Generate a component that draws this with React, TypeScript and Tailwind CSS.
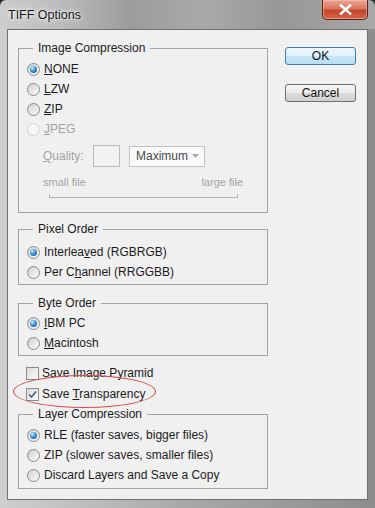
import type { ReactNode } from 'react';

const ui = "font-['Liberation_Sans',Arial,sans-serif]";

function Radio({ on = false, disabled = false }: { on?: boolean; disabled?: boolean }) {
  if (disabled) {
    return <span className="h-[13px] w-[13px] shrink-0 rounded-full border border-[#d2d2d2] bg-[#f5f5f5]" />;
  }
  return (
    <span className="flex h-[13px] w-[13px] shrink-0 items-center justify-center rounded-full border border-[#8b8b8b] bg-[linear-gradient(135deg,#cfcfcf,#fdfdfd)]">
      {on ? (
        <span className="h-[7px] w-[7px] rounded-full bg-[radial-gradient(circle_at_35%_30%,#c4ecff,#3d93d4_45%,#0e4c84)]" />
      ) : (
        <span className="h-[9px] w-[9px] rounded-full bg-[linear-gradient(135deg,#d4d4d4,#f7f7f7)]" />
      )}
    </span>
  );
}

function Check({ on = false }: { on?: boolean }) {
  return (
    <span className="flex h-[13px] w-[13px] shrink-0 items-center justify-center border border-[#8b8b8b] bg-[linear-gradient(135deg,#dadada,#fdfdfd)]">
      {on && (
        <svg width="9" height="9" viewBox="0 0 9 9">
          <path d="M1 4.5 L3.5 7 L8 1.5" fill="none" stroke="#4a5a8e" strokeWidth="1.7" />
        </svg>
      )}
    </span>
  );
}

function Option({ children, on, disabled }: { children: ReactNode; on?: boolean; disabled?: boolean }) {
  return (
    <div className={`flex h-5 items-center gap-[4px] ${disabled ? 'text-[#a3a3a3]' : 'text-[#1b1b1b]'}`}>
      <Radio on={on} disabled={disabled} />
      <span>{children}</span>
    </div>
  );
}

function Group({ title, children, pad, className = '' }: { title: string; children: ReactNode; pad: string; className?: string }) {
  return (
    <fieldset className={`border border-[#a3a3a3] px-[8px] ${pad} ${className}`}>
      <legend className="ml-[6px] px-[5px] leading-[14px] text-[#1b1b1b]">{title}</legend>
      {children}
    </fieldset>
  );
}

export default function App() {
  return (
    <div className={`relative h-[508px] w-[375px] overflow-hidden bg-[#2a2a2a] ${ui} text-[12px]`}>
      <div className="flex h-full flex-col rounded-t-[6px] bg-[linear-gradient(90deg,#cdcdcd_0%,#bdbdbd_15%,#9c9c9c_35%,#a9a9a9_55%,#979797_75%,#a8a8a8_100%)]">
        {/* title bar */}
        <div className="flex h-[29px] shrink-0 items-start justify-between">
          <span className="pl-[8px] pt-[8px] text-[12.5px] leading-[14px] text-[#151515] [text-shadow:0_0_6px_#ffffff,0_0_3px_#ffffff]">
            TIFF Options
          </span>
          <div className="mr-[7px] flex h-[20px] w-[46px] items-center justify-center rounded-b-[5px] border border-t-0 border-[#5b2118] bg-[linear-gradient(180deg,#e9a593_0%,#d9765d_45%,#c2432a_55%,#d8664a_100%)] shadow-[inset_0_0_0_1px_rgba(255,200,180,0.5)]">
            <svg width="13" height="11" viewBox="0 0 13 11">
              <path d="M2 1.5 L11 9.5 M11 1.5 L2 9.5" stroke="#ffffff" strokeWidth="2.6" strokeLinecap="square" />
            </svg>
          </div>
        </div>

        {/* client area */}
        <div className="flex min-h-0 flex-1 bg-[linear-gradient(90deg,#cfcfcf_0%,#a8a8a8_50%,#8d8d8d_100%)] px-[7px] pb-[8px]">
          <div className="flex h-[471px] flex-1 gap-[17px] border border-[#6f6f6f] bg-[#f0f0f0] pl-[10px] pt-[11px]">
            {/* left column */}
            <div className="flex w-[250px] flex-col">
              <Group title="Image Compression" pad="pt-[4px] pb-[14px]">
                <Option on><u>N</u>ONE</Option>
                <Option><u>L</u>ZW</Option>
                <Option><u>Z</u>IP</Option>
                <Option disabled><u>J</u>PEG</Option>
                <div className="mt-[6px] flex h-[22px] items-center pl-[16px] text-[#a3a3a3]">
                  <span className="w-[50px]"><u>Q</u>uality:</span>
                  <span className="h-[22px] w-[27px] border border-[#bcbcbc] bg-[#f2f2f2]" />
                  <span className="ml-[9px] flex h-[21px] w-[76px] items-center justify-between border border-[#c2c2c2] bg-[#fafafa] pl-[6px] pr-[5px] text-[#4a4a4a]">
                    Maximum
                    <svg width="7" height="4" viewBox="0 0 7 4">
                      <path d="M0 0 H7 L3.5 4 Z" fill="#a8a8a8" />
                    </svg>
                  </span>
                </div>
                <div className="mt-[8px] flex h-[14px] items-center justify-between px-[16px] text-[11px] text-[#a3a3a3]">
                  <span>small file</span>
                  <span>large file</span>
                </div>
                <div className="ml-[22px] mr-[21px] mt-[5px] h-[4px] border-x border-b border-[#b4b4b4]" />
              </Group>

              <Group title="Pixel Order" pad="pt-[6px] pb-[2px]" className="mt-[9px]">
                <Option on>Interlea<u>v</u>ed (RGBRGB)</Option>
                <Option>Per C<u>h</u>annel (RRGGBB)</Option>
              </Group>

              <Group title="Byte Order" pad="pt-[3px] pb-[2px]" className="mt-[11px]">
                <Option on><u>I</u>BM PC</Option>
                <Option><u>M</u>acintosh</Option>
              </Group>

              <div className="mt-[7px] flex h-5 items-center gap-[3px] pl-[8px] text-[#1b1b1b]">
                <Check />
                <span>Save Image Pyramid</span>
              </div>
              <div className="mt-[1px] flex h-5 items-center gap-[3px] pl-[8px] text-[#1b1b1b]">
                <Check on />
                <span>Save <u>T</u>ransparency</span>
              </div>

              <Group title="Layer Compression" pad="pt-[4px] pb-[3px]" className="mt-[3px]">
                <Option on>RLE (faster saves, bigger files)</Option>
                <Option>ZIP (slower saves, smaller files)</Option>
                <Option>Discard Layers and Save a Copy</Option>
              </Group>
            </div>

            {/* right column */}
            <div className="flex w-[71px] flex-col pt-[6px]">
              <button className="h-[18px] rounded-[3px] border border-[#3c7fb1] bg-[linear-gradient(180deg,#edf7fd_0%,#dff1fb_50%,#c7e6f7_51%,#b9def3_100%)] text-[12px] leading-none text-[#111]">
                OK
              </button>
              <button className="mt-[19px] h-[18px] rounded-[3px] border border-[#707070] bg-[linear-gradient(180deg,#f4f4f4_0%,#ebebeb_50%,#dddddd_51%,#cfcfcf_100%)] text-[12px] leading-none text-[#111]">
                Cancel
              </button>
            </div>
          </div>
        </div>
      </div>

      {/* red annotation ellipse */}
      <div className="pointer-events-none absolute left-[13px] top-[375px] h-[33px] w-[143px] rounded-[50%] border-[1.5px] border-[#d84a4a]" />
    </div>
  );
}
